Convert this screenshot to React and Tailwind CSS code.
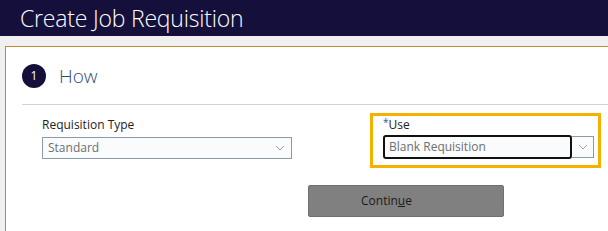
import React from "react";

const Chevron = () => (
  <svg width="10" height="6" viewBox="0 0 10 6" fill="none">
    <path d="M1 1l4 4 4-4" stroke="#9aa3ab" strokeWidth="1" />
  </svg>
);

const App = () => {
  return (
    <div
      className="w-[608px] h-[231px] overflow-hidden bg-[#f0f0f0]"
      style={{ fontFamily: '"Open Sans", "Noto Sans", sans-serif' }}
    >
      {/* header */}
      <div className="h-[36px] bg-[#15103b] flex items-center pl-[20px]">
        <h1 className="text-[23px] font-light text-white leading-none tracking-[-0.2px]">
          Create Job Requisition
        </h1>
      </div>

      <div className="pt-[10px] pl-[5px]">
        <div className="bg-white border-t border-l border-[#b98f2e] h-[200px] pl-[16px]">
          {/* step title */}
          <div className="flex items-center gap-[13px] pt-[17px] pb-[16px]">
            <div className="w-[24px] h-[24px] rounded-full bg-[#15103b] text-white text-[12px] flex items-center justify-center">
              1
            </div>
            <span className="text-[19px] font-light text-[#2f4a72] leading-none">How</span>
          </div>
          <div className="h-px bg-[#d2d2d2]" />

          {/* form */}
          <div className="flex items-start pl-[20px] pt-[8px]">
            <div className="w-[250px] pt-[4px]">
              <div className="text-[12px] leading-[16px] text-[#222] mb-[4px]">Requisition Type</div>
              <div className="h-[22px] border border-[#8a9aa6] bg-[#f9fbfd] flex items-center justify-between pl-[5px] pr-[6px]">
                <span className="text-[12px] text-[#6f6f6f]">Standard</span>
                <Chevron />
              </div>
            </div>

            <div className="ml-[78px] w-[231px] border-[3px] border-[#f5b000] pl-[10px] pr-[4px] pb-[6px]">
              <div className="text-[12px] leading-[16px] text-[#222] mt-[1px] mb-[2px]">
                <sup className="text-[#2a5aa0] text-[10px] -top-[3px]">*</sup>Use
              </div>
              <div className="flex h-[24px]">
                <div className="flex-1 border-2 border-[#111] rounded-[3px] bg-[#f9fbfd] flex items-center pl-[4px]">
                  <span className="text-[12px] text-[#6f6f6f]">Blank Requisition</span>
                </div>
                <div className="w-[22px] my-px border border-l-0 border-[#8a9aa6] bg-[#f9fbfd] flex items-center justify-center">
                  <Chevron />
                </div>
              </div>
            </div>
          </div>

          <div className="pl-[286px] pt-[17px]">
            <button className="w-[196px] h-[32px] bg-[#808080] border border-[#707070] rounded-[2px] text-[12px] text-[#1a1a1a] flex items-center pl-[52px]">
              Contin<span className="underline">u</span>e
            </button>
          </div>
        </div>
      </div>
    </div>
  );
};

export default App;
